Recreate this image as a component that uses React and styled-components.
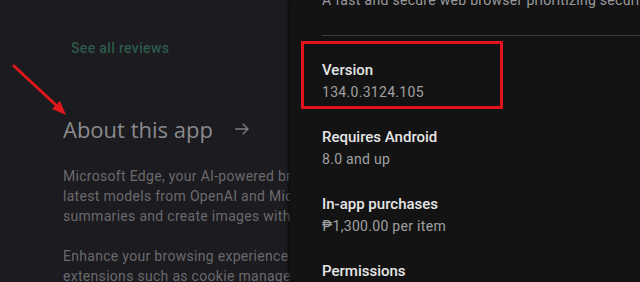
import styled, { createGlobalStyle } from "styled-components";

const GlobalStyle = createGlobalStyle`
  html, body {
    margin: 0;
    padding: 0;
    background: #1c1b1f;
    overflow: hidden;
  }
`;

const Screen = styled.div`
  position: relative;
  display: flex;
  width: 640px;
  height: 282px;
  overflow: hidden;
  font-family: Roboto, "Liberation Sans", sans-serif;
`;

const Backdrop = styled.div`
  width: 290px;
  flex: none;
  overflow: hidden;
  background: #1c1b1f;
  padding: 38px 0 0 63px;
  box-sizing: border-box;
`;

const ReviewsLink = styled.div`
  margin-left: 8px;
  font-size: 14px;
  line-height: 20px;
  font-weight: 500;
  letter-spacing: 0.35px;
  color: #2d5a4a;
`;

const SectionHead = styled.div`
  display: flex;
  align-items: center;
  gap: 20px;
  margin-top: 57px;
  height: 28px;
`;

const SectionTitle = styled.h2`
  margin: 0;
  font-family: "Open Sans", Roboto, sans-serif;
  font-size: 22px;
  line-height: 28px;
  font-weight: 500;
  color: #8a8a8e;
  white-space: nowrap;
`;

const Blurb = styled.p`
  margin: ${(p) => (p.$first ? "23px" : "20px")} 0 0;
  font-size: 14px;
  line-height: 20px;
  letter-spacing: 0.3px;
  color: #6a6a6e;
  white-space: nowrap;
`;

const Sheet = styled.div`
  flex: 1;
  background: #131313;
  box-shadow: -2px 0 3px rgba(0, 0, 0, 0.6);
  padding-left: 32px;
  display: flex;
  flex-direction: column;
`;

const Summary = styled.div`
  margin-top: -10px;
  font-size: 14px;
  line-height: 20px;
  letter-spacing: 0.3px;
  color: #9a9a9e;
  white-space: nowrap;
`;

const Divider = styled.hr`
  margin: 25px 0 0;
  border: none;
  border-top: 1px solid #3a3d40;
`;

const InfoList = styled.div`
  display: flex;
  flex-direction: column;
  gap: 25px;
  margin-top: 24px;
`;

const InfoItem = styled.div`
  display: flex;
  flex-direction: column;
  gap: 2px;
`;

const InfoLabel = styled.div`
  font-size: 15px;
  line-height: 20px;
  font-weight: 500;
  color: #e6e6e6;
`;

const InfoValue = styled.div`
  font-size: 14px;
  line-height: 20px;
  letter-spacing: 0.3px;
  color: #a0a0a0;
`;

const Highlight = styled.div`
  position: absolute;
  left: 301px;
  top: 41px;
  width: 202px;
  height: 68px;
  box-sizing: border-box;
  border: 3px solid #e3121c;
  border-radius: 1px;
`;

const Pointer = styled.svg`
  position: absolute;
  left: 0;
  top: 0;
`;

const info = [
  { label: "Version", value: "134.0.3124.105" },
  { label: "Requires Android", value: "8.0 and up" },
  { label: "In-app purchases", value: "₱1,300.00 per item" },
  { label: "Permissions", value: "View details" },
];

export default function App() {
  return (
    <>
      <GlobalStyle />
      <Screen>
        <Backdrop>
          <ReviewsLink>See all reviews</ReviewsLink>
          <SectionHead>
            <SectionTitle>About this app</SectionTitle>
            <svg width="18" height="18" viewBox="0 0 24 24" fill="none" stroke="#7c7c80" strokeWidth="1.8">
              <path d="M3 12h17M13 5l7 7-7 7" />
            </svg>
          </SectionHead>
          <Blurb $first>
            Microsoft Edge, your AI-powered browser, brings you Copilot with the
            <br />
            latest models from OpenAI and Microsoft. Ask questions, get
            <br />
            summaries and create images with a simple prompt.
          </Blurb>
          <Blurb>
            Enhance your browsing experience with privacy features and
            <br />
            extensions such as cookie management and ad blockers.
          </Blurb>
        </Backdrop>
        <Sheet>
          <Summary>A fast and secure web browser prioritizing security and privacy</Summary>
          <Divider />
          <InfoList>
            {info.map((item) => (
              <InfoItem key={item.label}>
                <InfoLabel>{item.label}</InfoLabel>
                <InfoValue>{item.value}</InfoValue>
              </InfoItem>
            ))}
          </InfoList>
        </Sheet>
        <Highlight />
        <Pointer width="80" height="120" viewBox="0 0 80 120">
          <line x1="14" y1="66" x2="58" y2="107" stroke="#e0171b" strokeWidth="3" strokeLinecap="round" />
          <polygon points="66,115 52,109 60,101" fill="#e0171b" />
        </Pointer>
      </Screen>
    </>
  );
}
